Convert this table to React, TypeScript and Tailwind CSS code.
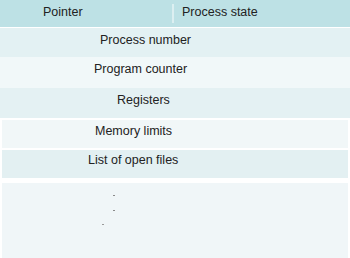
const rows = [
  { label: "Process number", bg: "bg-[#e3f1f3]", h: "h-[29px]", pl: "pl-[100px]", pt: "pt-[5px]" },
  { label: "Program counter", bg: "bg-[#f1f8f9]", h: "h-[31px]", pl: "pl-[94px]", pt: "pt-[5px]" },
  { label: "Registers", bg: "bg-[#e4f1f3]", h: "h-[30px]", pl: "pl-[117px]", pt: "pt-[5px]" },
];

const App = () => {
  return (
    <div
      className="flex flex-col w-[350px] h-[258px] bg-white text-[12.5px] leading-[14px] text-[#222]"
      style={{ fontFamily: '"Liberation Sans", Arial, sans-serif' }}
    >
      <div className="flex h-[27px] bg-[#bde1e5]">
        <div className="w-[172px] pl-[43px] pt-[5px]">Pointer</div>
        <div className="w-[2px] mt-[4px] h-[19px] bg-[#dcefF1]" />
        <div className="pl-[8px] pt-[5px]">Process state</div>
      </div>

      <div className="h-px" />

      {rows.map((r) => (
        <div key={r.label} className={`${r.h} ${r.bg} ${r.pl} ${r.pt}`}>
          {r.label}
        </div>
      ))}

      <div className="h-[2px]" />

      <div className="h-[28px] mx-[2px] bg-[#f1f7f8] pl-[93px] pt-[4px]">Memory limits</div>

      <div className="h-[2px]" />

      <div className="h-[28px] mx-[2px] bg-[#e3f0f2] pl-[86px] pt-[3px]">List of open files</div>

      <div className="h-[5px]" />

      <div className="flex-1 mx-[2px] bg-[#f0f6f8] flex flex-col">
        <div className="h-[12px]" />
        <div className="w-[2px] h-px ml-[111px] bg-[#8a8a8a]" />
        <div className="h-[14px]" />
        <div className="w-[2px] h-px ml-[111px] bg-[#8a8a8a]" />
        <div className="h-[13px]" />
        <div className="w-[2px] h-px ml-[100px] bg-[#9a9a9a]" />
      </div>
    </div>
  );
};

export default App;
